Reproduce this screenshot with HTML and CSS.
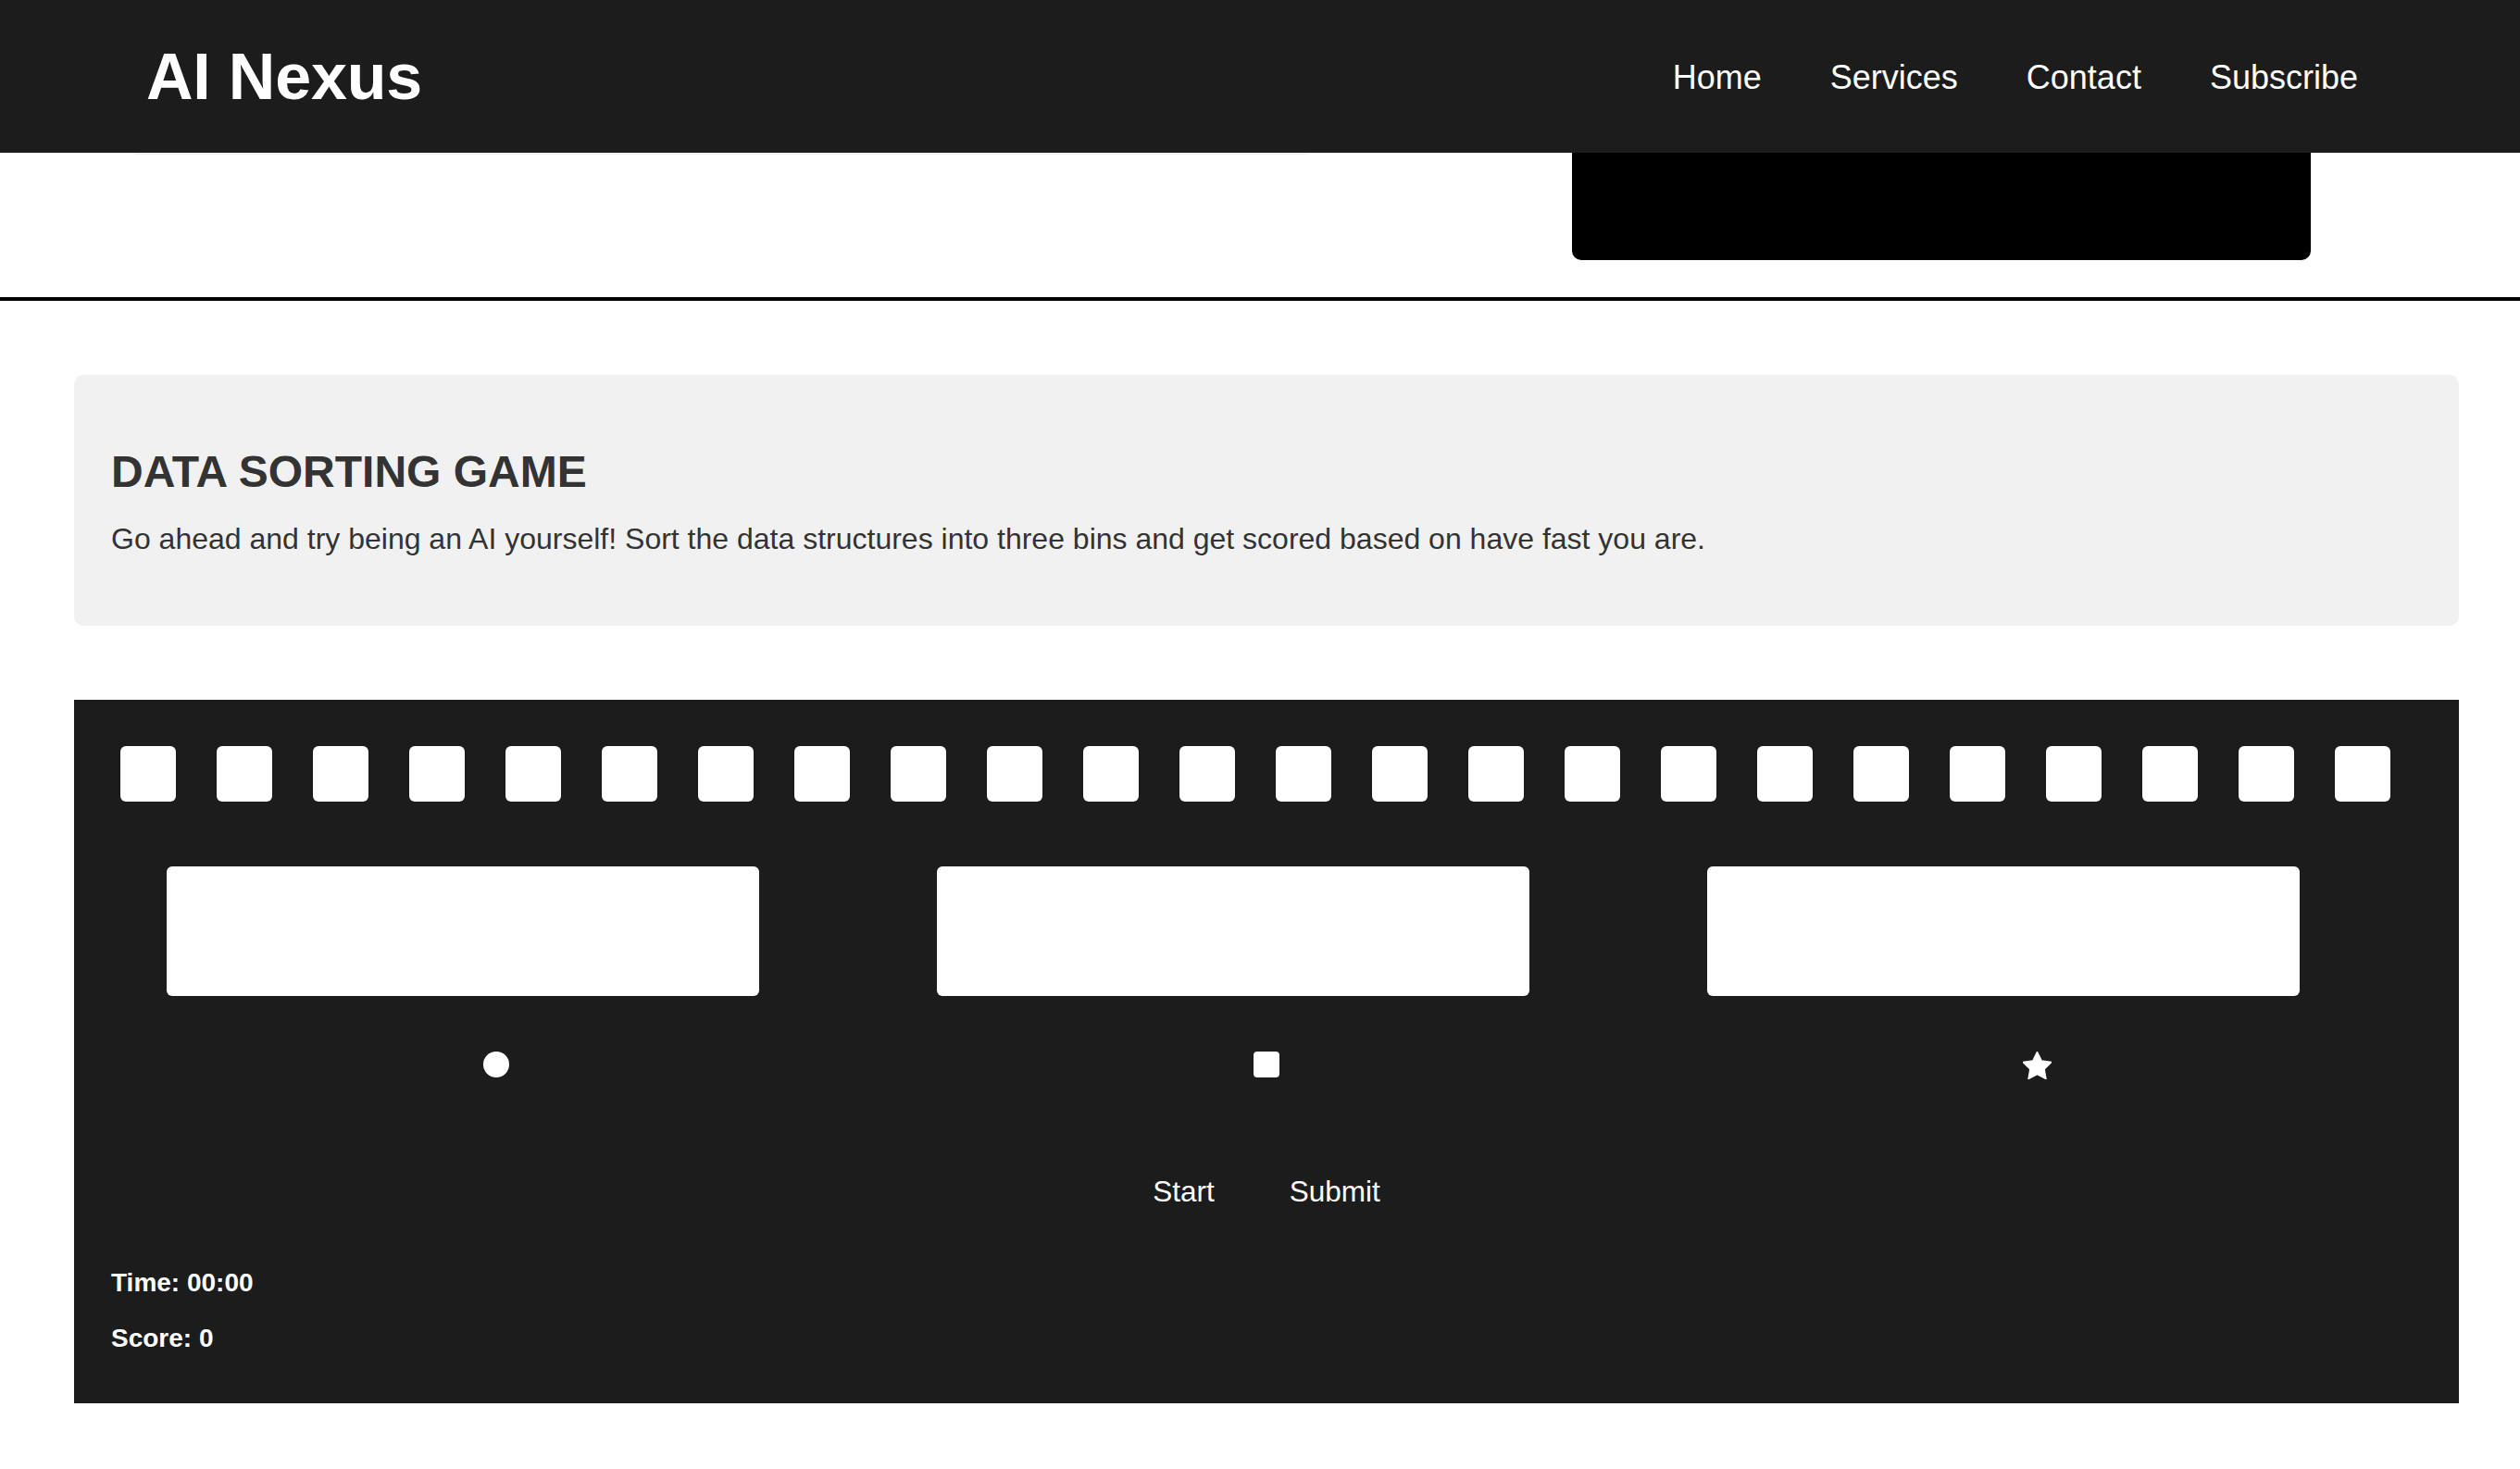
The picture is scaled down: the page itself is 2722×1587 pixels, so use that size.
FILE: index.html
```html
<!DOCTYPE html>
<html lang="en">
<head>
<meta charset="utf-8">
<title>AI Nexus - Data Sorting Game</title>
<link rel="stylesheet" href="styles.css">
</head>
<body>
<header class="site-header">
  <div class="logo">AI Nexus</div>
  <nav class="nav">
    <a href="#">Home</a>
    <a href="#">Services</a>
    <a href="#">Contact</a>
    <a href="#">Subscribe</a>
  </nav>
</header>

<section class="hero">
  <div class="ghost-card"></div>
  <div class="promo-box"></div>
</section>
<hr class="divider">

<main class="main">
  <section class="intro-card">
    <h2 class="intro-title">DATA SORTING GAME</h2>
    <p class="intro-text">Go ahead and try being an AI yourself! Sort the data structures into three bins and get scored based on have fast you are.</p>
  </section>

  <section class="game">
    <div class="items">
      <div class="item"></div><div class="item"></div><div class="item"></div><div class="item"></div>
      <div class="item"></div><div class="item"></div><div class="item"></div><div class="item"></div>
      <div class="item"></div><div class="item"></div><div class="item"></div><div class="item"></div>
      <div class="item"></div><div class="item"></div><div class="item"></div><div class="item"></div>
      <div class="item"></div><div class="item"></div><div class="item"></div><div class="item"></div>
      <div class="item"></div><div class="item"></div><div class="item"></div><div class="item"></div>
    </div>
    <div class="bins">
      <div class="bin"></div>
      <div class="bin"></div>
      <div class="bin"></div>
    </div>
    <div class="labels">
      <div class="label"><span class="shape-circle"></span></div>
      <div class="label"><span class="shape-square"></span></div>
      <div class="label">
        <svg class="shape-star" viewBox="2 2 20 19.1" width="31" height="30" aria-hidden="true">
          <polygon points="12,2 15.09,8.26 22,9.27 17,14.14 18.18,21.02 12,17.77 5.82,21.02 7,14.14 2,9.27 8.91,8.26" fill="#fff" stroke="#fff" stroke-width="0.8" stroke-linejoin="round"/>
        </svg>
      </div>
    </div>
    <div class="controls">
      <button class="ctrl-btn" type="button">Start</button>
      <button class="ctrl-btn" type="button">Submit</button>
    </div>
    <div class="stats">
      <div class="stat">Time: 00:00</div>
      <div class="stat">Score: 0</div>
    </div>
  </section>
</main>
<div class="page-end"></div>
</body>
</html>
```

FILE: styles.css
```css
* {
  box-sizing: border-box;
}

html, body {
  margin: 0;
  padding: 0;
  background: #ffffff;
  font-family: "Liberation Sans", Arial, sans-serif;
}

.site-header {
  height: 165px;
  background: #1c1c1c;
  display: flex;
  align-items: center;
  justify-content: space-between;
  padding: 0 175px 0 158px;
  position: relative;
  z-index: 2;
}

.logo {
  color: #ffffff;
  font-size: 70px;
  font-weight: 700;
  line-height: 1;
  letter-spacing: -0.2px;
}

.nav {
  display: flex;
  gap: 74px;
  padding-top: 2px;
}

.nav a {
  color: #ffffff;
  text-decoration: none;
  font-size: 36px;
  line-height: 1;
}

.hero {
  height: 156px;
  display: flex;
  align-items: flex-start;
}

.ghost-card {
  margin-left: 145px;
  width: 1268px;
  height: 2px;
  background: #f1f1f1;
  border-radius: 0 0 6px 6px;
}

.promo-box {
  margin-left: 285px;
  width: 798px;
  height: 116px;
  background: #000000;
  border-radius: 0 0 10px 10px;
}

.divider {
  margin: 0;
  border: 0;
  height: 4px;
  background: #000000;
}

.main {
  padding: 80px 66px 71px 80px;
}

.intro-card {
  background: #f1f1f1;
  border-radius: 10px;
  height: 271px;
  padding: 78px 40px 0 40px;
}

.intro-title {
  margin: 0;
  color: #333333;
  font-size: 48px;
  line-height: 54px;
  font-weight: 700;
}

.intro-text {
  margin: 27px 0 0 0;
  color: #333333;
  font-size: 32px;
  line-height: 37px;
}

.game {
  margin-top: 80px;
  background: #1c1c1c;
  height: 760px;
  padding: 50px 40px 0 40px;
}

.items {
  display: flex;
  gap: 44px;
  margin-left: 10px;
}

.item {
  width: 60px;
  height: 60px;
  background: #ffffff;
  border-radius: 6px;
  flex: none;
}

.bins {
  display: flex;
  gap: 192px;
  margin-top: 70px;
  padding-left: 60px;
}

.bin {
  width: 640px;
  height: 140px;
  background: #ffffff;
  border-radius: 6px;
  flex: none;
}

.labels {
  display: grid;
  grid-template-columns: repeat(3, 1fr);
  margin-top: 60px;
  height: 28px;
}

.label {
  display: flex;
  justify-content: center;
  align-items: center;
  height: 28px;
}

.shape-circle {
  width: 28px;
  height: 28px;
  border-radius: 50%;
  background: #ffffff;
  display: block;
}

.shape-square {
  width: 28px;
  height: 28px;
  border-radius: 4px;
  background: #ffffff;
  display: block;
}

.shape-star {
  display: block;
  margin-top: 1px;
}

.controls {
  display: flex;
  justify-content: center;
  gap: 81px;
  margin-top: 105px;
}

.ctrl-btn {
  background: transparent;
  border: 0;
  padding: 0;
  color: #ffffff;
  font-family: "Liberation Sans", Arial, sans-serif;
  font-size: 31.5px;
  line-height: 36px;
  cursor: pointer;
}

.stats {
  margin-top: 65px;
}

.stat {
  color: #ffffff;
  font-size: 28px;
  font-weight: 700;
  line-height: 32px;
  margin-bottom: 28px;
}
```
